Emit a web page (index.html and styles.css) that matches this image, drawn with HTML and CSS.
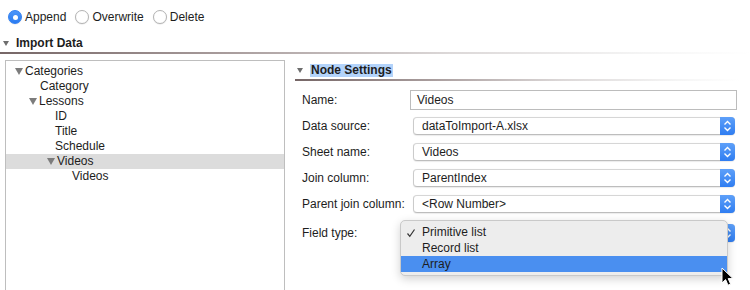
FILE: index.html
```html
<!DOCTYPE html>
<html>
<head>
<meta charset="utf-8">
<link rel="stylesheet" href="styles.css">
</head>
<body>
<div class="radios">
  <label class="radio"><span class="knob on"></span>Append</label>
  <label class="radio"><span class="knob"></span>Overwrite</label>
  <label class="radio"><span class="knob"></span>Delete</label>
</div>
<div class="section-head"><span class="disc"></span><span class="title">Import Data</span></div>
<div class="rule"></div>
<div class="main">
  <div class="tree">
    <div class="row e0"><span class="tri"></span>Categories</div>
    <div class="row f1">Category</div>
    <div class="row e1"><span class="tri"></span>Lessons</div>
    <div class="row f2">ID</div>
    <div class="row f2">Title</div>
    <div class="row f2">Schedule</div>
    <div class="row e2 sel"><span class="tri"></span>Videos</div>
    <div class="row f3">Videos</div>
  </div>
  <div class="settings">
    <div class="sub-head"><span class="disc"></span><span class="title hl">Node Settings</span></div>
    <div class="rule sub-rule"></div>
    <div class="form">
      <div class="frow name-row">
        <div class="lbl">Name:</div>
        <div class="ctl"><div class="input">Videos</div></div>
      </div>
      <div class="frow first-sel">
        <div class="lbl">Data source:</div>
        <div class="ctl"><div class="select"><span class="val">dataToImport-A.xlsx</span><span class="step"><svg width="15" height="18" viewBox="0 0 15 18"><path d="M4.5 7.5 L7.5 4.5 L10.5 7.5 M4.5 10.5 L7.5 13.5 L10.5 10.5" fill="none" stroke="#fff" stroke-width="1.4"/></svg></span></div></div>
      </div>
      <div class="frow">
        <div class="lbl">Sheet name:</div>
        <div class="ctl"><div class="select"><span class="val">Videos</span><span class="step"><svg width="15" height="18" viewBox="0 0 15 18"><path d="M4.5 7.5 L7.5 4.5 L10.5 7.5 M4.5 10.5 L7.5 13.5 L10.5 10.5" fill="none" stroke="#fff" stroke-width="1.4"/></svg></span></div></div>
      </div>
      <div class="frow">
        <div class="lbl">Join column:</div>
        <div class="ctl"><div class="select"><span class="val">ParentIndex</span><span class="step"><svg width="15" height="18" viewBox="0 0 15 18"><path d="M4.5 7.5 L7.5 4.5 L10.5 7.5 M4.5 10.5 L7.5 13.5 L10.5 10.5" fill="none" stroke="#fff" stroke-width="1.4"/></svg></span></div></div>
      </div>
      <div class="frow">
        <div class="lbl">Parent join column:</div>
        <div class="ctl"><div class="select"><span class="val">&lt;Row Number&gt;</span><span class="step"><svg width="15" height="18" viewBox="0 0 15 18"><path d="M4.5 7.5 L7.5 4.5 L10.5 7.5 M4.5 10.5 L7.5 13.5 L10.5 10.5" fill="none" stroke="#fff" stroke-width="1.4"/></svg></span></div></div>
      </div>
      <div class="frow ft-row">
        <div class="lbl">Field type:</div>
        <div class="ctl">
          <div class="select"><span class="val">Primitive list</span><span class="step"><svg width="15" height="18" viewBox="0 0 15 18"><path d="M4.5 7.5 L7.5 4.5 L10.5 7.5 M4.5 10.5 L7.5 13.5 L10.5 10.5" fill="none" stroke="#fff" stroke-width="1.4"/></svg></span></div>
          <div class="menu">
            <div class="item checked"><svg class="check" width="10" height="10" viewBox="0 0 10 10"><path d="M1.5 5.5 L3.8 8.3 L8.5 1.5" fill="none" stroke="#333" stroke-width="1.2"/></svg>Primitive list</div>
            <div class="item">Record list</div>
            <div class="item active">Array</div>
          </div>
        </div>
      </div>
    </div>
  </div>
</div>
<svg class="cursor" width="14" height="20" viewBox="0 0 14 20"><path d="M1 1 L1 16 L4.6 12.6 L7 18.2 L9.6 17.1 L7.2 11.6 L12 11.6 Z" fill="#000" stroke="#fff" stroke-width="1" stroke-linejoin="round"/></svg>
</body>
</html>
```
FILE: styles.css
```css
* { box-sizing: border-box; }
html, body { margin: 0; padding: 0; background: #fff; }
body {
  width: 750px;
  height: 290px;
  overflow: hidden;
  position: relative;
  font-family: "Liberation Sans", Arial, sans-serif;
  font-size: 12px;
  color: #1d1d1d;
}
.radios {
  height: 34px;
  display: flex;
  align-items: center;
  padding-left: 8px;
}
.radio {
  display: flex;
  align-items: center;
  margin-right: 9px;
}
.knob {
  width: 14px;
  height: 14px;
  border-radius: 50%;
  border: 1px solid #b4b4b4;
  background: #fff;
  box-shadow: 0 0.5px 1px rgba(0,0,0,0.12);
  margin-right: 3px;
  display: inline-flex;
  align-items: center;
  justify-content: center;
}
.knob.on {
  border-color: #2f7ff2;
  background: linear-gradient(#4d96f8, #2a7bf1);
}
.knob.on::after {
  content: "";
  width: 5px;
  height: 5px;
  border-radius: 50%;
  background: #fff;
}
.section-head {
  height: 18px;
  display: flex;
  align-items: center;
  padding-left: 3px;
}
.disc {
  width: 0;
  height: 0;
  border-left: 3.5px solid transparent;
  border-right: 3.5px solid transparent;
  border-top: 5px solid #6e6e6e;
  margin-right: 7px;
}
.title { font-weight: bold; }
.rule {
  height: 2px;
  background: linear-gradient(90deg, #766666 0%, #a89c9c 30%, #dcd8d8 60%, #f4f4f4 85%, #fff 100%);
}
.main {
  display: flex;
  margin-top: 6px;
}
.tree {
  width: 280px;
  height: 240px;
  margin-left: 5px;
  border: 1px solid #bebebe;
  border-bottom: none;
  padding-top: 3px;
}
.row {
  height: 15px;
  line-height: 15px;
  display: flex;
  align-items: center;
  white-space: nowrap;
}
.row.sel { background: #dcdcdc; }
.tri {
  width: 0;
  height: 0;
  border-left: 4px solid transparent;
  border-right: 4px solid transparent;
  border-top: 7px solid #7c7c7c;
  margin-right: 2px;
}
.e0 { padding-left: 9px; }
.f1 { padding-left: 34px; }
.e1 { padding-left: 23px; }
.f2 { padding-left: 49px; }
.e2 { padding-left: 41px; }
.f3 { padding-left: 66px; }
.settings {
  flex: 1;
  margin-left: 5px;
  padding-left: 5px;
}
.sub-head {
  height: 17px;
  margin-top: 2px;
  display: flex;
  align-items: center;
  padding-left: 2px;
}
.sub-head .disc { margin-right: 7px; }
.hl {
  background: #b3d3fa;
  padding: 0 1px;
  line-height: 13px;
}
.sub-rule {
  width: 445px;
}
.form {
  margin-top: 9px;
  padding-left: 7px;
  padding-right: 13px;
  display: flex;
  flex-direction: column;
}
.frow {
  display: flex;
  align-items: center;
  height: 18px;
  margin-top: 8px;
}
.frow.name-row { height: 20px; margin-top: 0; }
.frow.first-sel { margin-top: 7px; }
.frow.ft-row { margin-top: 11px; }
.lbl { width: 108px; }
.ctl {
  flex: 1;
  position: relative;
  height: 100%;
}
.input {
  height: 20px;
  border: 1px solid #bcbcbc;
  padding-left: 6px;
  line-height: 18px;
  background: #fff;
}
.select {
  height: 18px;
  margin-left: 3px;
  margin-right: 2px;
  border: 1px solid #cbcbcb;
  border-top-color: #d6d6d6;
  border-bottom-color: #bdbdbd;
  border-radius: 4px;
  background: #fff;
  box-shadow: 0 0.5px 1px rgba(0,0,0,0.08);
  display: flex;
  align-items: stretch;
}
.val {
  flex: 1;
  padding-left: 8px;
  line-height: 16px;
  white-space: nowrap;
}
.step {
  width: 15px;
  margin: -1px -1px -1px 0;
  border-radius: 0 4px 4px 0;
  background: linear-gradient(#5ea0f9, #2f7df1);
  display: flex;
  align-items: center;
  justify-content: center;
}
.menu {
  position: absolute;
  left: -10px;
  top: -4px;
  width: 328px;
  padding: 3px 0;
  background: #ededed;
  border: 1px solid #c9c9c9;
  border-radius: 5px;
  box-shadow: 0 3px 10px rgba(0,0,0,0.18);
}
.item {
  height: 16px;
  line-height: 16px;
  padding-left: 21px;
  position: relative;
  color: #1d1d1d;
}
.item.active { background: #4a8ff0; }
.check {
  position: absolute;
  left: 5px;
  top: 4px;
}
.cursor {
  position: absolute;
  left: 721px;
  top: 267px;
}
```
